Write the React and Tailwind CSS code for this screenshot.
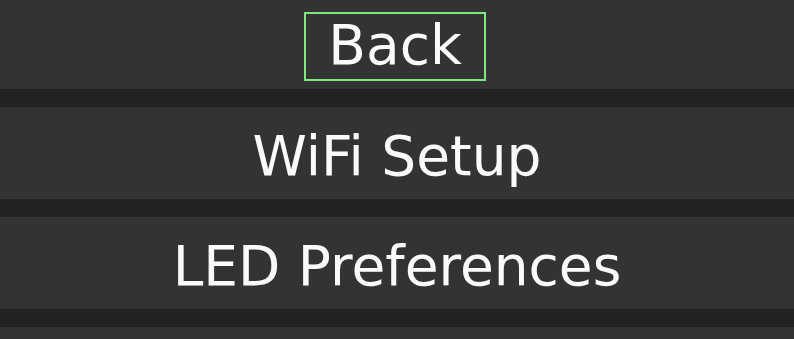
const ITEMS = ["Back", "WiFi Setup", "LED Preferences", ""];

function Row({ label, selected, first }) {
  return (
    <div
      className={`flex h-[92px] items-center justify-center bg-[#333333] ${first ? "-mt-[3px]" : ""}`}
    >
      {label && (
        <span
          className={`leading-[62px] text-[55px] text-[#fafafa] ${
            selected ? "border-[2px] border-[#7ee87e] px-[22px] pb-[3px] mt-[7px] mr-[4px]" : "mt-[5px]"
          }`}
        >
          {label}
        </span>
      )}
    </div>
  );
}

export default function App() {
  return (
    <div
      className="h-[339px] w-[794px] overflow-hidden bg-[#232323]"
      style={{ fontFamily: '"DejaVu Sans", Verdana, sans-serif' }}
    >
      <div className="flex flex-col gap-[18px]">
        {ITEMS.map((label, i) => (
          <Row key={i} label={label} selected={i === 0} first={i === 0} />
        ))}
      </div>
    </div>
  );
}
